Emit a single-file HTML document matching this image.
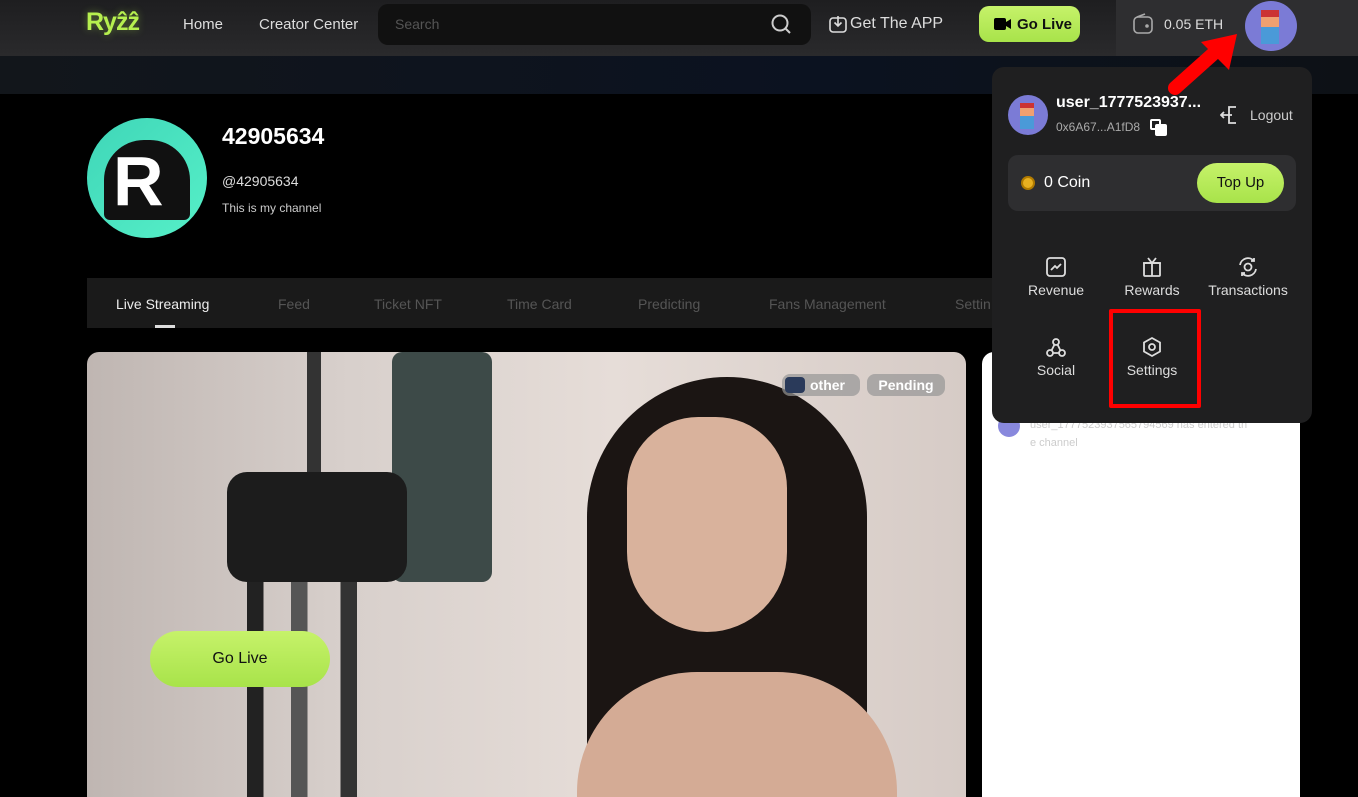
<!DOCTYPE html>
<html><head><meta charset="utf-8"><style>
*{box-sizing:border-box;margin:0;padding:0}
body{width:1358px;height:797px;overflow:hidden;background:#000;font-family:"Liberation Sans",sans-serif;position:relative;color:#fff}
.abs{position:absolute}
.hdr{left:0;top:0;width:1358px;height:56px;background:linear-gradient(#1e1e20,#2a2a2c)}
.band{left:0;top:56px;width:1358px;height:38px;background:linear-gradient(90deg,#12161b,#0b1220 60%,#0d1116)}
.nav{font-size:15px;color:#ddd;top:16px}
.btn{background:linear-gradient(#c6f26a,#a8e34a);color:#111;border-radius:10px;font-weight:bold}
.tab{top:296px;font-size:14px;color:#555}
.pop{left:992px;top:67px;width:320px;height:356px;background:#1f1f20;border-radius:12px}
.mi{font-size:14px;color:#ddd;text-align:center;width:90px}
</style></head><body>
<div class="abs hdr"></div>
<div class="abs" style="left:1116px;top:0;width:242px;height:56px;background:#2e2e30"></div>
<div class="abs band"></div>
<div class="abs" style="left:86px;top:8px;font-size:25px;font-weight:bold;color:#b6f04f;letter-spacing:-1px;text-shadow:0 0 8px rgba(180,240,80,.4)">Ryẑẑ</div>
<div class="abs nav" style="left:183px">Home</div>
<div class="abs nav" style="left:259px">Creator Center</div>
<div class="abs" style="left:378px;top:4px;width:433px;height:41px;background:#111;border-radius:10px"></div>
<div class="abs" style="left:395px;top:16px;font-size:14px;color:#555">Search</div>
<svg class="abs" style="left:770px;top:13px" width="22" height="22" viewBox="0 0 22 22"><circle cx="10" cy="10" r="7.5" stroke="#ccc" stroke-width="2" fill="none"/><path d="M15.5 15.5L20 20" stroke="#ccc" stroke-width="2"/></svg>
<svg class="abs" style="left:829px;top:15px" width="18" height="18" viewBox="0 0 18 18" fill="none" stroke="#ddd" stroke-width="1.6"><rect x="1" y="3" width="16" height="14" rx="3"/><path d="M9 1v10M5.5 7.5L9 11l3.5-3.5"/></svg>
<div class="abs" style="left:850px;top:15px;font-size:16px;color:#ddd">Get The APP</div>
<div class="abs btn" style="left:979px;top:6px;width:101px;height:36px"></div>
<svg class="abs" style="left:994px;top:17px" width="18" height="14" viewBox="0 0 18 14"><rect x="0" y="1" width="12" height="12" rx="2"/><path d="M12 5l5-3v10l-5-3z"/></svg>
<div class="abs" style="left:1017px;top:16px;font-size:15px;font-weight:bold;color:#111">Go Live</div>
<svg class="abs" style="left:1132px;top:13px" width="22" height="22" viewBox="0 0 22 22" fill="none" stroke="#aaa" stroke-width="1.6"><rect x="2" y="4" width="18" height="16" rx="4"/><path d="M5 4l8-3"/><circle cx="15" cy="13" r="1" fill="#aaa"/></svg>
<div class="abs" style="left:1164px;top:16px;font-size:14px;color:#ddd">0.05 ETH</div>
<div class="abs" style="left:1245px;top:1px;width:52px;height:50px;border-radius:50%;background:#7b7bd6"></div>
<div class="abs" style="left:1261px;top:10px;width:18px;height:34px;background:linear-gradient(#c33 0 20%,#f0a070 20% 50%,#4a9ad8 50%)"></div>

<!-- profile -->
<div class="abs" style="left:87px;top:118px;width:120px;height:120px;border-radius:50%;background:linear-gradient(135deg,#3fd6b8,#56f0c8)"></div>
<div class="abs" style="left:104px;top:140px;width:86px;height:80px;border-radius:40px 40px 6px 6px;background:#111"></div>
<div class="abs" style="left:113px;top:148px;font-size:70px;font-weight:bold;color:#fff;line-height:66px">R</div>
<div class="abs" style="left:222px;top:123px;font-size:23px;font-weight:bold">42905634</div>
<div class="abs" style="left:222px;top:173px;font-size:14px;color:#ddd">@42905634</div>
<div class="abs" style="left:222px;top:201px;font-size:12px;color:#ccc">This is my channel</div>

<div class="abs" style="left:87px;top:278px;width:915px;height:50px;background:#1a1a1a"></div>
<div class="abs tab" style="left:116px;color:#eee">Live Streaming</div>
<div class="abs" style="left:155px;top:325px;width:20px;height:3px;background:#ddd"></div>
<div class="abs tab" style="left:278px">Feed</div>
<div class="abs tab" style="left:374px">Ticket NFT</div>
<div class="abs tab" style="left:507px">Time Card</div>
<div class="abs tab" style="left:638px">Predicting</div>
<div class="abs tab" style="left:769px">Fans Management</div>
<div class="abs tab" style="left:955px">Settin</div>

<!-- video -->
<div class="abs" style="left:87px;top:352px;width:879px;height:445px;border-radius:12px 12px 0 0;overflow:hidden;background:linear-gradient(90deg,#bfb6b2 0%,#d8d0cc 30%,#e6ddd8 60%,#d6cbc6 100%)">
 <div class="abs" style="left:305px;top:0;width:100px;height:230px;background:#3d4a48;border-radius:10px"></div>
 <div class="abs" style="left:220px;top:0;width:14px;height:160px;background:#333"></div>
 <div class="abs" style="left:140px;top:120px;width:180px;height:110px;background:#1c1c1c;border-radius:20px"></div>
 <div class="abs" style="left:160px;top:230px;width:110px;height:215px;background:linear-gradient(90deg,#222 0 15%,transparent 15% 40%,#555 40% 55%,transparent 55% 85%,#333 85%)"></div>
 <div class="abs" style="left:500px;top:25px;width:280px;height:420px;border-radius:140px 140px 0 0;background:#1b1513"></div>
 <div class="abs" style="left:540px;top:65px;width:160px;height:215px;border-radius:80px 80px 90px 90px;background:#d9b29c"></div>
 <div class="abs" style="left:490px;top:320px;width:320px;height:125px;border-radius:120px 120px 0 0;background:#d4ab95"></div>
 <div class="abs" style="left:695px;top:22px;width:78px;height:22px;border-radius:8px;background:rgba(150,150,150,.7);font-size:14px;font-weight:bold;padding:3px 0 0 28px">other</div>
 <div class="abs" style="left:698px;top:25px;width:20px;height:16px;border-radius:4px;background:#2a3a5a"></div>
 <div class="abs" style="left:780px;top:22px;width:78px;height:22px;border-radius:8px;background:rgba(150,150,150,.7);font-size:14px;font-weight:bold;text-align:center;padding-top:3px">Pending</div>
 <div class="abs btn" style="left:63px;top:279px;width:180px;height:56px;border-radius:28px;font-weight:normal;font-size:16px;text-align:center;line-height:56px">Go Live</div>
</div>
<div class="abs" style="left:982px;top:352px;width:318px;height:445px;background:#fff;border-radius:12px 12px 0 0"></div>
<div class="abs" style="left:998px;top:415px;width:22px;height:22px;border-radius:50%;background:#8888dd"></div>
<div class="abs" style="left:1030px;top:416px;font-size:11px;color:#ccc;line-height:18px;width:260px">user_1777523937565794569 has entered th<br>e channel</div>

<!-- popup -->
<div class="abs pop"></div>
<div class="abs" style="left:1008px;top:95px;width:40px;height:40px;border-radius:50%;background:#7b7bd6"></div>
<div class="abs" style="left:1020px;top:103px;width:14px;height:26px;background:linear-gradient(#c33 0 20%,#f0a070 20% 50%,#4a9ad8 50%)"></div>
<div class="abs" style="left:1056px;top:94px;font-size:16px;font-weight:bold">user_1777523937...</div>
<div class="abs" style="left:1056px;top:120px;font-size:12px;color:#aaa">0x6A67...A1fD8</div>
<div class="abs" style="left:1150px;top:119px;width:11px;height:11px;border:2px solid #fff;border-radius:2px"></div>
<div class="abs" style="left:1155px;top:124px;width:12px;height:12px;background:#fff;border-radius:2px"></div>
<svg class="abs" style="left:1220px;top:105px" width="20" height="20" viewBox="0 0 20 20" fill="none" stroke="#ddd" stroke-width="1.8"><path d="M16 2H9v16h7M1 10h11M4 7l-3 3 3 3"/></svg>
<div class="abs" style="left:1250px;top:107px;font-size:14px;color:#ccc">Logout</div>
<div class="abs" style="left:1008px;top:155px;width:288px;height:56px;background:#2e2e30;border-radius:10px"></div>
<div class="abs" style="left:1021px;top:176px;width:14px;height:14px;border-radius:50%;background:#e8b020;border:2px solid #b07a00"></div>
<div class="abs" style="left:1044px;top:174px;font-size:16px">0 Coin</div>
<div class="abs btn" style="left:1197px;top:163px;width:87px;height:40px;border-radius:20px;font-weight:normal;font-size:15px;text-align:center;line-height:40px">Top Up</div>

<svg class="abs" style="left:1045px;top:256px" width="22" height="22" viewBox="0 0 22 22" fill="none" stroke="#ddd" stroke-width="1.8"><rect x="2" y="2" width="18" height="18" rx="3"/><path d="M6 14l4-4 2 2 4-4"/></svg>
<svg class="abs" style="left:1141px;top:256px" width="22" height="22" viewBox="0 0 22 22" fill="none" stroke="#ddd" stroke-width="1.8"><rect x="3" y="7" width="16" height="13" rx="1"/><path d="M2 7h18M11 7v13M7 2l4 5 4-5"/></svg>
<svg class="abs" style="left:1237px;top:256px" width="22" height="22" viewBox="0 0 22 22" fill="none" stroke="#ddd" stroke-width="1.8"><circle cx="11" cy="11" r="3.5"/><path d="M3 9a8 8 0 0 1 14-4M19 13a8 8 0 0 1-14 4M17 2v3h-3M5 20v-3h3"/></svg>
<div class="abs mi" style="left:1011px;top:282px">Revenue</div>
<div class="abs mi" style="left:1107px;top:282px">Rewards</div>
<div class="abs mi" style="left:1203px;top:282px">Transactions</div>
<svg class="abs" style="left:1045px;top:337px" width="22" height="22" viewBox="0 0 22 22" fill="none" stroke="#ddd" stroke-width="1.8"><circle cx="11" cy="5" r="3"/><circle cx="5" cy="16" r="3"/><circle cx="17" cy="16" r="3"/><path d="M9.5 7.5L6.5 13.5M12.5 7.5l3 6M8 16h6"/></svg>
<svg class="abs" style="left:1141px;top:336px" width="22" height="22" viewBox="0 0 22 22" fill="none" stroke="#ddd" stroke-width="1.8"><path d="M11 2l8 4.5v9L11 20l-8-4.5v-9z"/><circle cx="11" cy="11" r="3"/></svg>
<div class="abs mi" style="left:1011px;top:362px">Social</div>
<div class="abs mi" style="left:1107px;top:362px">Settings</div>
<div class="abs" style="left:1109px;top:309px;width:92px;height:99px;border:4px solid #f00;border-radius:2px"></div>

<!-- red arrow -->
<svg class="abs" style="left:1165px;top:30px" width="80" height="70" viewBox="0 0 80 70"><path d="M10 58L48 24" stroke="#f00" stroke-width="14" stroke-linecap="round"/><path d="M36 12L72 4L64 40z" fill="#f00"/></svg>
</body></html>
